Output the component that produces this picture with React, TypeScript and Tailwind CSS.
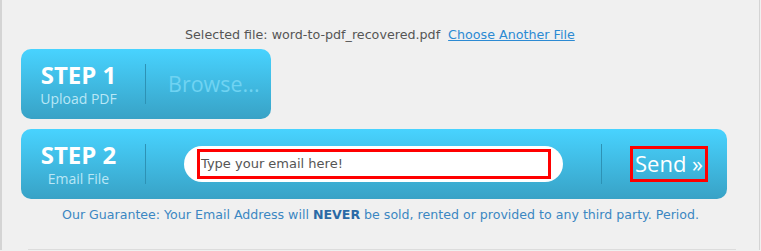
import React from "react";

const head = { fontFamily: '"Open Sans", "Noto Sans", sans-serif' };
const small = { fontFamily: '"DejaVu Sans", Verdana, sans-serif' };

function StepLabel({ n, sub }: { n: string; sub: string }) {
  return (
    <div className="flex w-[124px] shrink-0 items-center">
      <div className="ml-[19px] flex w-[77px] flex-col items-center" style={head}>
        <div className="text-[24px] font-bold leading-[24px] text-white">STEP {n}</div>
        <div className="mt-[4px] whitespace-nowrap text-[14px] leading-[15px] text-[#b9e7f6]">{sub}</div>
      </div>
    </div>
  );
}

export default function App() {
  return (
    <div className="h-[251px] w-[761px] bg-[#f0f0f0]">
      <div className="flex h-[250px] w-[760px] flex-col border-l-2 border-r border-[#d4d4d4]">
        <div className="flex h-[49px] items-start whitespace-nowrap pt-[25px] pl-[183px] text-[12.7px] text-[#555]" style={small}>
          <span>Selected file: word-to-pdf_recovered.pdf</span>
          <a href="#" className="ml-[8px] text-[#2b8ad3] underline">Choose Another File</a>
        </div>
        <div className="ml-[19px] flex h-[70px] w-[250px] items-center rounded-[10px] bg-gradient-to-b from-[#48d3ff] to-[#38a2c6]">
          <StepLabel n="1" sub="Upload PDF" />
          <div className="h-[40px] w-px bg-[#2d92b5]" />
          <div className="ml-[22px] whitespace-nowrap text-[21.5px] leading-none text-[#6fd3f2]" style={head}>Browse...</div>
        </div>
        <div className="ml-[19px] mt-[10px] flex h-[70px] w-[706px] items-center rounded-[10px] bg-gradient-to-b from-[#48d3ff] to-[#38a2c6]">
          <StepLabel n="2" sub="Email File" />
          <div className="h-[40px] w-px bg-[#2d92b5]" />
          <div className="ml-[38px] flex h-[36px] w-[379px] shrink-0 items-center rounded-full bg-white pl-[13px]">
            <div className="flex h-[30px] w-[354px] items-center whitespace-nowrap border-[3px] border-[#ff0000] pl-[1px] text-[13px] text-[#555]" style={small}>
              Type your email here!
            </div>
          </div>
          <div className="ml-[38px] h-[40px] w-px bg-[#2d92b5]" />
          <div className="ml-[28px] flex h-[36px] w-[78px] shrink-0 items-center justify-center whitespace-nowrap border-[3px] border-[#ff0000] pb-[2px] text-[22px] leading-none text-white" style={head}>
            Send »
          </div>
        </div>
        <div className="mt-[7px] whitespace-nowrap pl-[60px] text-[12.6px] text-[#3b87c2]" style={small}>
          Our Guarantee: Your Email Address will <b className="text-[#2a6aa6]">NEVER</b> be sold, rented or provided to any third party. Period.
        </div>
        <div className="mt-auto ml-[26px] h-px w-[708px] bg-[#dcdcdc]" />
      </div>
    </div>
  );
}
